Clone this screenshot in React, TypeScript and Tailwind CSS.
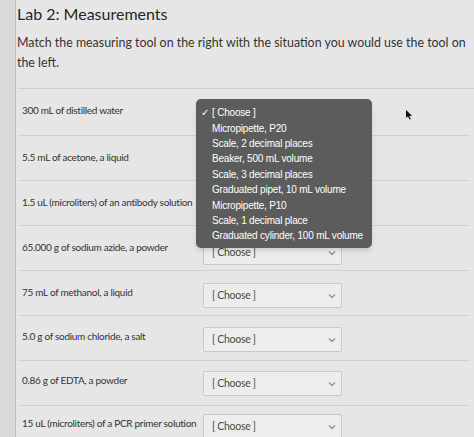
const rows = [
  { label: "300 mL of distilled water", lt: "mt-[14px]", st: "mt-[13px]" },
  { label: "5.5 mL of acetone, a liquid", lt: "mt-[14px]", st: "mt-[13px]" },
  { label: "1.5 uL (microliters) of an antibody solution", lt: "mt-[14px]", st: "mt-[13px]" },
  { label: "65.000 g of sodium azide, a powder", lt: "mt-[14px]", st: "mt-[14px]" },
  { label: "75 mL of methanol, a liquid", lt: "mt-[14px]", st: "mt-[12px]" },
  { label: "5.0 g of sodium chloride, a salt", lt: "mt-[13px]", st: "mt-[11px]" },
  { label: "0.86 g of EDTA, a powder", lt: "mt-[12px]", st: "mt-[10px]" },
  { label: "15 uL (microliters) of a PCR primer solution", lt: "mt-[10px]", st: "mt-[8px]" },
];

const options = [
  "[ Choose ]",
  "Micropipette, P20",
  "Scale, 2 decimal places",
  "Beaker, 500 mL volume",
  "Scale, 3 decimal places",
  "Graduated pipet, 10 mL volume",
  "Micropipette, P10",
  "Scale, 1 decimal place",
  "Graduated cylinder, 100 mL volume",
];

const Chevron = () => (
  <svg width="8" height="6" viewBox="0 0 8 6" fill="none">
    <path d="M1 1.5 L4 4.5 L7 1.5" stroke="#8a8a8a" strokeWidth="1.2" />
  </svg>
);

const Select = ({ hidden, top }: { hidden: boolean; top: string }) => (
  <div
    className={`w-[139px] h-[25px] bg-[#ededed] border border-[#c9c9c9] rounded-[2px] flex items-center justify-between pl-[8px] pr-[5px] text-[10.5px] tracking-[-0.3px] text-[#4a4a4a] ${top} ${
      hidden ? "invisible" : ""
    }`}
  >
    <span>[ Choose ]</span>
    <Chevron />
  </div>
);

export default function App() {
  return (
    <div
      className="relative min-h-screen h-[437px] overflow-hidden bg-[#e6e6e6] flex text-[#2f2f2f]"
      style={{ fontFamily: "Lato, 'Open Sans', sans-serif" }}
    >
      <div className="w-[16px] shrink-0 bg-[#dadada] border-r border-[#bdbdbd]" />
      <div className="flex-1 pt-[2px]">
        <h1 className="pl-[1px] text-[16px] leading-[24px] text-[#262626]">Lab 2: Measurements</h1>
        <p className="mt-[7px] pl-[1px] pr-[4px] text-[12.4px] leading-[20px] text-[#333]">
          Match the measuring tool on the right with the situation you would use the tool on the left.
        </p>
        <div className="mt-[15px] ml-[2px] border-t border-[#cfcfcf]">
          {rows.map((r, i) => (
            <div
              key={i}
              className={`${i === 0 ? "h-[46px]" : "h-[45px] border-t border-[#d0d0d0]"} flex items-start mr-[4px]`}
            >
              <div
                className={`w-[185px] ${r.lt} pl-[4px] text-[10px] leading-[14px] tracking-[-0.3px] text-[#333] whitespace-nowrap`}
              >
                {r.label}
              </div>
              <Select hidden={i < 3} top={r.st} />
            </div>
          ))}
        </div>
      </div>

      <div
        className="absolute left-[196px] top-[99px] w-[176px] rounded-[5px] bg-[#5b5d5d] pt-[6px] pb-[4px] shadow-md text-[10px] tracking-[-0.2px] text-white"
        style={{ fontFamily: "'Liberation Sans', Arial, sans-serif" }}
      >
        {options.map((o, i) => (
          <div key={i} className="h-[15.4px] flex items-center pl-[16px] relative whitespace-nowrap">
            {i === 0 && <span className="absolute left-[5px]">✓</span>}
            {o}
          </div>
        ))}
      </div>

      <svg className="absolute left-[405px] top-[110px]" width="8" height="10" viewBox="0 0 8 10">
        <path d="M1 0 L1 8 L3 6.3 L4.5 9.5 L5.8 9 L4.4 5.9 L7 5.7 Z" fill="#111" />
      </svg>
    </div>
  );
}
